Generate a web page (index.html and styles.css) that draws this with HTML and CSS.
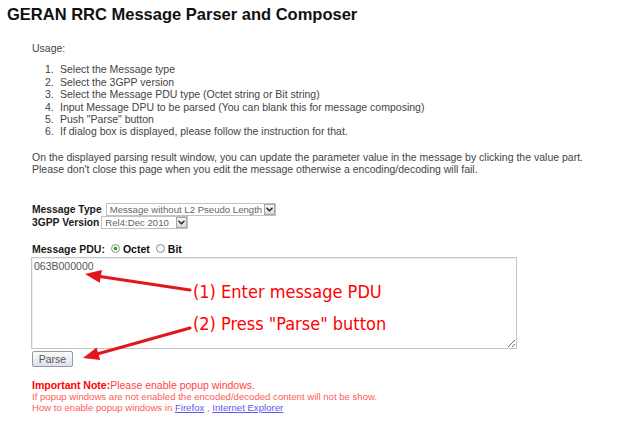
FILE: index.html
```html
<!DOCTYPE html>
<html>
<head>
<meta charset="utf-8">
<title>GERAN RRC Message Parser and Composer</title>
<link rel="stylesheet" href="styles.css">
</head>
<body>
<h1 class="title">GERAN RRC Message Parser and Composer</h1>
<div class="content">
  <p class="usage">Usage:</p>
  <ol class="steps">
    <li>Select the Message type</li>
    <li>Select the 3GPP version</li>
    <li>Select the Message PDU type (Octet string or Bit string)</li>
    <li>Input Message DPU to be parsed (You can blank this for message composing)</li>
    <li>Push "Parse" button</li>
    <li>If dialog box is displayed, please follow the instruction for that.</li>
  </ol>
  <p class="info">On the displayed parsing result window, you can update the parameter value in the message by clicking the value part.<br>Please don't close this page when you edit the message otherwise a encoding/decoding will fail.</p>

  <div class="selects">
    <div class="sel-row">
      <span class="sel-label">Message Type</span>
      <span class="select sel-type"><span class="sel-text">Message without L2 Pseudo Length</span><span class="sel-btn"><svg width="7" height="5" viewBox="0 0 7 5"><path d="M0.5 0.8 L3.5 3.8 L6.5 0.8" fill="none" stroke="#222" stroke-width="1.4"/></svg></span></span>
    </div>
    <div class="sel-row">
      <span class="sel-label">3GPP Version</span>
      <span class="select sel-ver"><span class="sel-text">Rel4:Dec 2010</span><span class="sel-btn"><svg width="7" height="5" viewBox="0 0 7 5"><path d="M0.5 0.8 L3.5 3.8 L6.5 0.8" fill="none" stroke="#222" stroke-width="1.4"/></svg></span></span>
    </div>
  </div>

  <div class="pdu-row">
    <span class="pdu-label">Message PDU:</span>
    <label class="radio"><input type="radio" name="pdutype" checked><span>Octet</span></label>
    <label class="radio"><input type="radio" name="pdutype"><span>Bit</span></label>
  </div>

  <div class="pdu-block">
    <textarea class="pdu-input" spellcheck="false">063B000000</textarea>
    <button class="parse">Parse</button>
    <svg class="annot" width="400" height="112" viewBox="0 0 400 112">
      <g fill="#e3161d" stroke="none">
        <line x1="159" y1="33" x2="69" y2="19.4" stroke="#e3161d" stroke-width="3" stroke-linecap="round"/>
        <polygon points="54,17 70.9,13 68.7,25.8"/>
        <line x1="159" y1="71" x2="67" y2="96.8" stroke="#e3161d" stroke-width="3" stroke-linecap="round"/>
        <polygon points="52,101 65.6,90.6 69.2,102.9"/>
      </g>
      <text class="annot-text" x="162" y="41">(1) Enter message PDU</text>
      <text class="annot-text" x="162" y="73">(2) Press "Parse" button</text>
    </svg>
  </div>

  <div class="note">
    <div class="note-main"><b class="note-head">Important Note:</b>Please enable popup windows.</div>
    <div class="note-small">If popup windows are not enabled the encoded/decoded content will not be show.</div>
    <div class="note-small">How to enable popup windows in <a href="#">Firefox</a> , <a href="#">Internet Explorer</a></div>
  </div>
</div>
</body>
</html>
```

FILE: styles.css
```css
html, body {
  margin: 0;
  padding: 0;
  background: #ffffff;
}
body {
  font-family: "Liberation Sans", Arial, sans-serif;
  color: #444444;
  font-size: 10.5px;
}
.title {
  margin: 4px 0 0 7px;
  font-size: 16.5px;
  line-height: 21px;
  font-weight: bold;
  color: #111111;
}
.content {
  padding-left: 32px;
}
.usage {
  margin: 17px 0 0 0;
  line-height: 12.4px;
}
.steps {
  margin: 9px 0 0 0;
  padding-left: 13px;
  list-style: none;
  counter-reset: step;
}
.steps li {
  display: flex;
  line-height: 12.4px;
  counter-increment: step;
}
.steps li::before {
  content: counter(step) ".";
  width: 8px;
  margin-right: 7px;
  text-align: right;
  flex: none;
}
.info {
  margin: 13px 0 0 0;
  line-height: 12px;
}
.selects {
  margin-top: 28px;
}
.sel-row {
  display: flex;
  align-items: center;
  height: 13px;
}
.sel-label {
  font-weight: bold;
  font-size: 10.3px;
  color: #1a1a1a;
  margin-right: 4px;
}
.sel-row + .sel-row .sel-label {
  margin-right: 2px;
}
.select {
  display: inline-flex;
  align-items: stretch;
  box-sizing: border-box;
  height: 13px;
  border: 1px solid #c3c3c3;
  background: #ffffff;
}
.sel-type {
  width: 170px;
}
.sel-ver {
  width: 87px;
}
.sel-text {
  flex: 1;
  font-size: 9.6px;
  line-height: 11px;
  color: #666666;
  padding-left: 3px;
  white-space: nowrap;
  overflow: hidden;
}
.sel-btn {
  display: flex;
  align-items: center;
  justify-content: center;
  box-sizing: border-box;
  width: 11px;
  margin: 0;
  border: 1px solid #a5a5a5;
  background: linear-gradient(#f6f6f6, #d9d9d9);
}
.pdu-row {
  margin-top: 13px;
  display: flex;
  align-items: center;
  height: 15px;
}
.pdu-label {
  font-weight: bold;
  font-size: 10.5px;
  color: #1a1a1a;
  margin-right: 6px;
}
.radio {
  display: inline-flex;
  align-items: center;
  font-weight: bold;
  font-size: 10.5px;
  color: #111111;
  margin-right: 6px;
}
.radio input {
  -webkit-appearance: none;
  appearance: none;
  box-sizing: border-box;
  width: 9px;
  height: 9px;
  margin: 0 3px 0 0;
  border: 1px solid #8c8c8c;
  border-radius: 50%;
  background: radial-gradient(circle, #ffffff 0, #f0f0f0 100%);
  position: relative;
  top: -1px;
}
.radio input:checked {
  background: radial-gradient(circle, #2da52d 0, #2da52d 1.6px, #ffffff 2.2px, #f0f0f0 100%);
}
.pdu-block {
  position: relative;
  margin: 0 0 0 -1px;
}
.pdu-input {
  display: block;
  box-sizing: border-box;
  width: 486px;
  height: 92px;
  margin: 0;
  padding: 2px 2px;
  border: 1px solid #c6c6c6;
  box-shadow: inset 1px 1px 0 #eeeeee;
  font-family: "Liberation Sans", Arial, sans-serif;
  font-size: 10.5px;
  line-height: 12px;
  color: #555555;
  resize: both;
  outline: none;
}
.parse {
  display: block;
  box-sizing: border-box;
  width: 41px;
  height: 16px;
  margin: 2px 0 0 1px;
  padding: 0;
  border: 1px solid #8d9bb0;
  border-radius: 2px;
  background: linear-gradient(#fcfcfc, #dfe1e6);
  font-family: "Liberation Sans", Arial, sans-serif;
  font-size: 10.5px;
  color: #555555;
}
.annot {
  position: absolute;
  left: 0;
  top: 0;
  pointer-events: none;
}
.annot-text {
  font-family: "DejaVu Sans Condensed", "DejaVu Sans", sans-serif;
  font-stretch: condensed;
  font-size: 18px;
  fill: #ff0000;
}
.note {
  margin-top: 12px;
}
.note-main {
  font-size: 10.5px;
  line-height: 12.6px;
  color: #ff4444;
}
.note-head {
  color: #ff0000;
}
.note-small {
  font-size: 9.6px;
  line-height: 11px;
  color: #ff5a5a;
}
.note-small a {
  color: #5a5af0;
}
```
